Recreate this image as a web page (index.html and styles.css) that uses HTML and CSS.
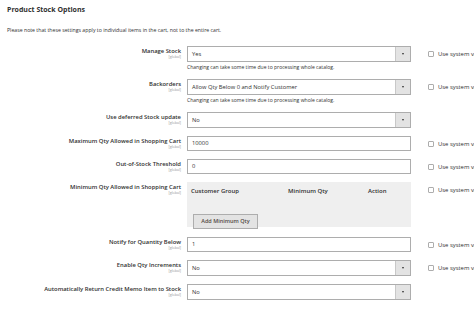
FILE: index.html
```html
<!DOCTYPE html>
<html>
<head>
<meta charset="utf-8">
<link rel="stylesheet" href="styles.css">
</head>
<body>
<div class="page">
  <h2 class="title">Product Stock Options</h2>
  <p class="notice">Please note that these settings apply to individual items in the cart, not to the entire cart.</p>

  <div class="row">
    <div class="label"><span class="name">Manage Stock</span><span class="scope">[global]</span></div>
    <div class="control">
      <div class="select"><span class="val">Yes</span><span class="btn"><i class="arrow"></i></span></div>
      <div class="note">Changing can take some time due to processing whole catalog.</div>
    </div>
    <div class="use"><span class="box"></span><span>Use system value</span></div>
  </div>

  <div class="row">
    <div class="label"><span class="name">Backorders</span><span class="scope">[global]</span></div>
    <div class="control">
      <div class="select"><span class="val">Allow Qty Below 0 and Notify Customer</span><span class="btn"><i class="arrow"></i></span></div>
      <div class="note">Changing can take some time due to processing whole catalog.</div>
    </div>
    <div class="use"><span class="box"></span><span>Use system value</span></div>
  </div>

  <div class="row">
    <div class="label"><span class="name">Use deferred Stock update</span><span class="scope">[global]</span></div>
    <div class="control">
      <div class="select"><span class="val">No</span><span class="btn"><i class="arrow"></i></span></div>
    </div>
  </div>

  <div class="row">
    <div class="label"><span class="name">Maximum Qty Allowed in Shopping Cart</span><span class="scope">[global]</span></div>
    <div class="control">
      <div class="input">10000</div>
    </div>
    <div class="use"><span class="box"></span><span>Use system value</span></div>
  </div>

  <div class="row">
    <div class="label"><span class="name">Out-of-Stock Threshold</span><span class="scope">[global]</span></div>
    <div class="control">
      <div class="input">0</div>
    </div>
    <div class="use"><span class="box"></span><span>Use system value</span></div>
  </div>

  <div class="row row-table">
    <div class="label"><span class="name">Minimum Qty Allowed in Shopping Cart</span><span class="scope">[global]</span></div>
    <div class="control">
      <div class="table">
        <div class="thead">
          <span class="c1">Customer Group</span>
          <span class="c2">Minimum Qty</span>
          <span class="c3">Action</span>
        </div>
        <div class="tfoot"><span class="add">Add Minimum Qty</span></div>
      </div>
    </div>
    <div class="use"><span class="box"></span><span>Use system value</span></div>
  </div>

  <div class="row">
    <div class="label"><span class="name">Notify for Quantity Below</span><span class="scope">[global]</span></div>
    <div class="control">
      <div class="input">1</div>
    </div>
    <div class="use"><span class="box"></span><span>Use system value</span></div>
  </div>

  <div class="row">
    <div class="label"><span class="name">Enable Qty Increments</span><span class="scope">[global]</span></div>
    <div class="control">
      <div class="select"><span class="val">No</span><span class="btn"><i class="arrow"></i></span></div>
    </div>
    <div class="use"><span class="box"></span><span>Use system value</span></div>
  </div>

  <div class="row">
    <div class="label"><span class="name">Automatically Return Credit Memo Item to Stock</span><span class="scope">[global]</span></div>
    <div class="control">
      <div class="select"><span class="val">No</span><span class="btn"><i class="arrow"></i></span></div>
    </div>
  </div>
</div>
</body>
</html>
```

FILE: styles.css
```css
html, body {
  margin: 0;
  padding: 0;
  background: #ffffff;
  overflow: hidden;
}
body {
  font-family: "Open Sans", "DejaVu Sans", sans-serif;
  color: #303030;
}
.page {
  width: 474px;
  overflow: hidden;
}
.title {
  margin: 0;
  padding: 5px 0 0 7px;
  font-size: 7px;
  line-height: 9px;
  font-weight: 700;
  color: #303030;
}
.notice {
  margin: 0;
  padding: 13px 0 0 7px;
  font-size: 5.2px;
  line-height: 7px;
  color: #303030;
  white-space: nowrap;
}
.row {
  display: flex;
  align-items: flex-start;
  margin-bottom: 8px;
}
.row:nth-of-type(1) {
  margin-top: 12px;
}
.row-table {
  margin-bottom: 10px;
}
.label {
  width: 181px;
  flex: none;
  text-align: right;
  display: flex;
  flex-direction: column;
  align-items: flex-end;
  padding-top: 1.5px;
}
.name {
  font-size: 5.85px;
  line-height: 7px;
  font-weight: 600;
  color: #303030;
  white-space: nowrap;
}
.scope {
  font-size: 3.6px;
  line-height: 4.5px;
  color: #999999;
}
.control {
  width: 224px;
  flex: none;
  margin-left: 6px;
}
.select {
  height: 16px;
  box-sizing: border-box;
  border: 1px solid #adadad;
  background: #ffffff;
  display: flex;
  align-items: stretch;
}
.val {
  flex: 1;
  font-size: 5.75px;
  line-height: 14px;
  padding-left: 4px;
  color: #303030;
}
.btn {
  width: 14px;
  flex: none;
  background: #e3e3e3;
  border-left: 1px solid #c8c8c8;
  display: flex;
  align-items: center;
  justify-content: center;
}
.arrow {
  width: 0;
  height: 0;
  border-left: 1.5px solid transparent;
  border-right: 1.5px solid transparent;
  border-top: 2px solid #303030;
}
.input {
  height: 15px;
  box-sizing: border-box;
  border: 1px solid #adadad;
  background: #ffffff;
  font-size: 5.75px;
  line-height: 13px;
  padding-left: 4px;
  color: #303030;
}
.note {
  font-size: 5.05px;
  line-height: 6px;
  padding-top: 1.5px;
  height: 9px;
  box-sizing: border-box;
  color: #303030;
  white-space: nowrap;
}
.use {
  margin-left: 17px;
  padding-top: 5px;
  display: flex;
  align-items: center;
  white-space: nowrap;
  font-size: 5.9px;
  line-height: 6px;
  color: #303030;
}
.box {
  width: 6px;
  height: 6px;
  box-sizing: border-box;
  border: 1px solid #adadad;
  border-radius: 1px;
  background: #ffffff;
  margin-right: 4px;
  flex: none;
}
.table {
  background: #efefef;
  height: 45px;
  box-sizing: border-box;
}
.thead {
  display: flex;
  padding: 6px 0 0 4px;
  height: 18px;
  box-sizing: border-box;
  font-size: 6px;
  line-height: 6px;
  font-weight: 600;
  color: #303030;
}
.c1 { width: 97px; }
.c2 { width: 80px; }
.tfoot {
  padding: 6px 0 0 6px;
}
.add {
  display: inline-block;
  width: 65px;
  height: 15px;
  box-sizing: border-box;
  border: 1px solid #adadad;
  background: #e3e3e3;
  font-size: 5.5px;
  line-height: 13px;
  font-weight: 600;
  text-align: center;
  color: #514943;
}
```
